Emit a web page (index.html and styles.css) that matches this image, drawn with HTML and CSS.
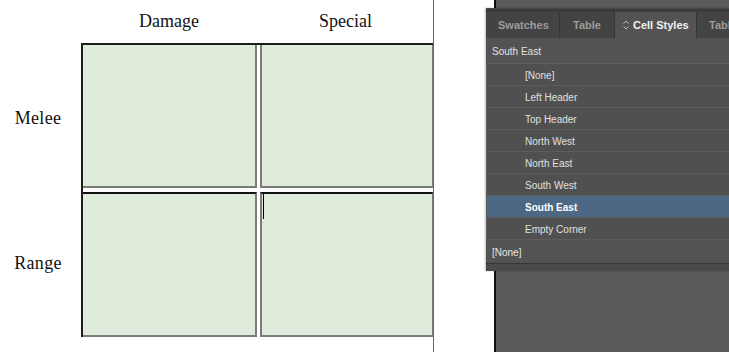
FILE: index.html
```html
<!DOCTYPE html>
<html lang="en">
<head>
<meta charset="utf-8">
<title>Cell Styles</title>
<link rel="stylesheet" href="styles.css">
</head>
<body>
<div class="app">
  <main class="page">
    <div class="sheet">
      <div class="corner"></div>
      <div class="colheads">
        <div class="colhead">Damage</div>
        <div class="colhead">Special</div>
      </div>
      <div class="rowheads">
        <div class="rowhead rowhead-top">Melee</div>
        <div class="rowhead rowhead-bottom">Range</div>
      </div>
      <div class="table">
        <div class="cell c-tl"></div>
        <div class="cell c-tr"></div>
        <div class="cell c-bl"></div>
        <div class="cell c-br"><span class="caret"></span></div>
      </div>
    </div>
  </main>
  <div class="gutter"></div>
  <div class="canvas"></div>

  <section class="panel">
    <div class="tabbar">
      <div class="tab tab-swatches">Swatches</div>
      <div class="tab tab-table">Table</div>
      <div class="tab tab-active">
        <svg class="updown" width="6" height="10" viewBox="0 0 6 10"><path d="M0.5 3.5 L3 1 L5.5 3.5 M0.5 6.5 L3 9 L5.5 6.5" fill="none" stroke="#bdbdbd" stroke-width="1"/></svg>
        <span>Cell Styles</span>
      </div>
      <div class="tab tab-more">Tabl</div>
    </div>
    <div class="current">South East</div>
    <ul class="list">
      <li class="item">[None]</li>
      <li class="item">Left Header</li>
      <li class="item">Top Header</li>
      <li class="item">North West</li>
      <li class="item">North East</li>
      <li class="item">South West</li>
      <li class="item item-selected">South East</li>
      <li class="item">Empty Corner</li>
    </ul>
    <div class="footer">[None]</div>
    <div class="bottom"></div>
  </section>
</div>
</body>
</html>
```

FILE: styles.css
```css
html, body {
  margin: 0;
  padding: 0;
  background: #ffffff;
}

.app {
  position: relative;
  display: flex;
  width: 729px;
  height: 352px;
  overflow: hidden;
}

.page {
  width: 433px;
  flex: none;
  border-right: 1px solid #8d3fe3;
  background: #ffffff;
}

.sheet {
  display: grid;
  grid-template-columns: 81px 352px;
  grid-template-rows: 43px 294px;
}

.colheads {
  display: grid;
  grid-template-columns: 176px 176px;
  padding-top: 11px;
  box-sizing: border-box;
}

.colhead,
.rowhead {
  font-family: "Liberation Serif", "Times New Roman", serif;
  font-size: 18px;
  line-height: 20px;
  color: #111111;
  text-align: center;
}

.colhead:last-child {
  padding-left: 1px;
}

.rowheads {
  display: flex;
  flex-direction: column;
  padding-right: 5px;
}

.rowhead {
  display: flex;
  align-items: center;
  justify-content: center;
  letter-spacing: 0.3px;
}

.rowhead-top {
  height: 145px;
  padding-top: 5px;
  box-sizing: border-box;
}

.rowhead-bottom {
  height: 149px;
}

.table {
  display: grid;
  grid-template-columns: 174px 173px;
  grid-template-rows: 143px 145px;
  column-gap: 3px;
  row-gap: 4px;
  border-top: 2px solid #1c1c1c;
  border-left: 2px solid #1c1c1c;
  background: #ffffff;
}

.cell {
  background: #e0ecdb;
  box-sizing: border-box;
}

.c-tl {
  border-right: 2px solid #7b7b7b;
  border-bottom: 2px solid #7b7b7b;
}

.c-tr {
  border-left: 2px solid #7b7b7b;
  border-right: 1px solid #7b7b7b;
  border-bottom: 2px solid #7b7b7b;
}

.c-bl {
  border-top: 2px solid #111111;
  border-right: 2px solid #7b7b7b;
  border-bottom: 2px solid #7b7b7b;
}

.c-br {
  border-top: 2px solid #111111;
  border-left: 2px solid #7b7b7b;
  border-right: 1px solid #7b7b7b;
  border-bottom: 2px solid #7b7b7b;
  padding-left: 1px;
}

.caret {
  display: block;
  width: 1px;
  height: 25px;
  background: #000000;
}

.gutter {
  width: 60px;
  flex: none;
  background: #ffffff;
}

.canvas {
  flex: 1;
  background: #5a5a5a;
  border-left: 2px solid #0e0e0e;
}

/* floating panel */
.panel {
  position: absolute;
  left: 486px;
  top: 8px;
  width: 243px;
  overflow: hidden;
  background: #535353;
  box-shadow: -1px 0 2px rgba(0, 0, 0, 0.25);
  font-family: "Liberation Sans", Arial, sans-serif;
  font-size: 10px;
  color: #e2e2e2;
}

.tabbar {
  display: flex;
  align-items: flex-end;
  height: 30px;
  background: #3b3b3b;
  border-top: 1px solid #474747;
  box-sizing: border-box;
}

.tab {
  flex: none;
  height: 26px;
  display: flex;
  align-items: center;
  box-sizing: border-box;
  background: #434343;
  border-right: 1px solid #363636;
  color: #9c9c9c;
  font-weight: bold;
  font-size: 11px;
  white-space: nowrap;
}

.tab-swatches {
  width: 74px;
  padding-left: 12px;
}

.tab-table {
  width: 55px;
  padding-left: 13px;
}

.tab-active {
  width: 82px;
  padding-left: 8px;
  gap: 4px;
  background: #535353;
  color: #f2f2f2;
}

.tab-more {
  width: 40px;
  padding-left: 12px;
  border-right: none;
}

.updown {
  display: block;
}

.current {
  height: 26px;
  padding: 2px 0 0 6px;
  display: flex;
  align-items: center;
  box-sizing: border-box;
  border-bottom: 1px solid #5f5f5f;
}

.list {
  list-style: none;
  margin: 0;
  padding: 0;
  background: #505050;
  border-left: 1px solid #5c5c5c;
}

.item {
  height: 22px;
  padding: 2px 0 0 38px;
  display: flex;
  align-items: center;
  box-sizing: border-box;
  border-bottom: 1px solid #5c5c5c;
  color: #e0e0e0;
}

.item-selected {
  background: #4c6884;
  color: #ffffff;
  font-weight: bold;
}

.footer {
  height: 23px;
  padding: 2px 0 0 6px;
  display: flex;
  align-items: center;
  box-sizing: border-box;
  color: #e6e6e6;
}

.bottom {
  height: 8px;
  background: #4a4a4a;
  border-top: 1px solid #373737;
  box-sizing: border-box;
}
```
